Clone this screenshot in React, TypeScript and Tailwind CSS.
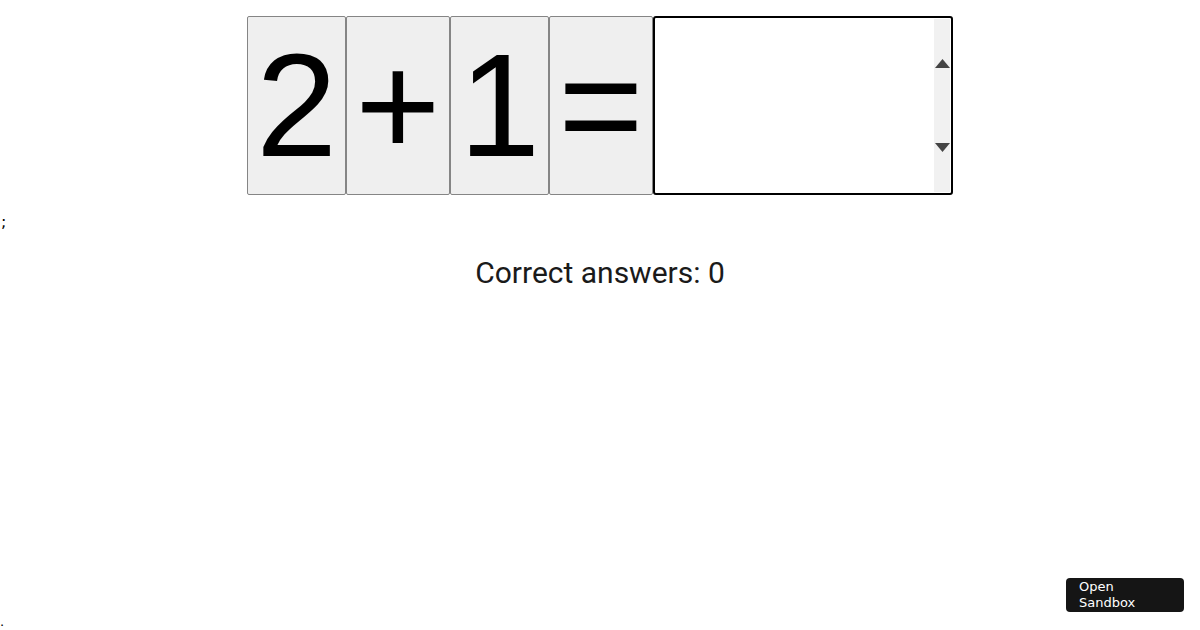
export default function App() {
  const keys = [
    { label: "2", width: "w-[99px]" },
    { label: "+", width: "w-[104px]" },
    { label: "1", width: "w-[99px]" },
    { label: "=", width: "w-[104px]" },
  ]

  return (
    <div className="relative min-h-[630px] bg-white font-['DejaVu_Sans',sans-serif] text-black">
      <div className="flex justify-center pt-[16px]">
        {keys.map((k) => (
          <button
            key={k.label}
            type="button"
            className={`flex h-[179px] ${k.width} items-center justify-center rounded-[2px] border border-[#858585] bg-[#efefef] font-['Liberation_Sans',Arial,sans-serif] text-[146px] leading-none`}
          >
            {k.label}
          </button>
        ))}
        <div className="flex h-[179px] w-[300px] rounded-[3px] border-2 border-black bg-white">
          <div className="flex-1" />
          <div className="my-[1px] mr-[1px] flex w-[16px] flex-col items-center justify-between bg-[#f1f1f1] py-[40px]">
            <svg width="15" height="9" viewBox="0 0 15 9">
              <path d="M7.5 0 L15 9 L0 9 Z" fill="#444" />
            </svg>
            <svg width="15" height="9" viewBox="0 0 15 9">
              <path d="M0 0 L15 0 L7.5 9 Z" fill="#444" />
            </svg>
          </div>
        </div>
      </div>
      <div className="mt-[18px] pl-[1px] text-[16px] leading-[18px]">;</div>
      <div className="mt-[22px] text-center font-['Roboto',sans-serif] text-[30px] leading-[40px] text-[#1a1a1a]">
        Correct answers: 0
      </div>
      <div className="absolute bottom-[2px] left-0 text-[13px] leading-none">.</div>
      <button
        type="button"
        className="absolute bottom-[18px] right-[16px] flex h-[34px] w-[118px] flex-col items-start justify-center rounded-[4px] bg-[#151515] pl-[13px] text-left text-[13px] leading-[16px] text-white"
      >
        <span>Open</span>
        <span>Sandbox</span>
      </button>
    </div>
  )
}
